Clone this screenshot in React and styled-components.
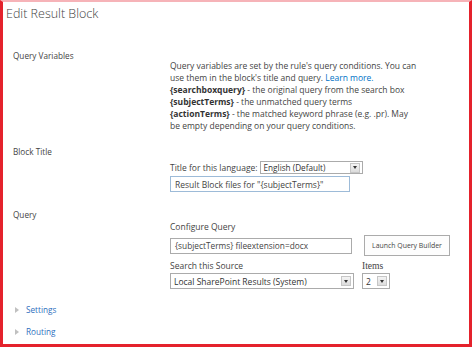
import React from "react";
import styled, { createGlobalStyle } from "styled-components";

const Global = createGlobalStyle`
  html, body { margin: 0; padding: 0; background: #fff; }
  body { font-family: "Open Sans", "Noto Sans", sans-serif; color: #444; }
  * { box-sizing: border-box; }
`;

const Frame = styled.div`
  width: 472px;
  height: 347px;
  border-left: 3px solid #e4222c;
  border-right: 3px solid #e4222c;
  border-bottom: 3px solid #e4222c;
  border-top: 2px solid #f6b3b8;
  display: flex;
  flex-direction: column;
  overflow: hidden;
`;

const Title = styled.h1`
  margin: 0;
  padding: 3px 0 0 3px;
  font-weight: 300;
  font-size: 12.5px;
  line-height: 18px;
  color: #444;
`;

const Section = styled.div`
  display: grid;
  grid-template-columns: 157px 1fr;
  padding-left: 10px;
  margin-top: ${(p) => p.$mt}px;
`;

const Label = styled.div`
  font-size: 8.2px;
  line-height: 12px;
  color: #444;
`;

const Content = styled.div`
  padding-top: ${(p) => p.$pt || 0}px;
  display: flex;
  flex-direction: column;
`;

const Desc = styled.p`
  margin: 0;
  font-size: 8.5px;
  line-height: 12px;
  color: #444;
  b { font-weight: 700; color: #333; }
  a { color: #0072c6; text-decoration: none; }
`;

const Row = styled.div`
  display: flex;
  align-items: ${(p) => p.$align || "center"};
  gap: ${(p) => p.$gap || 0}px;
  margin-top: ${(p) => p.$mt || 0}px;
`;

const SmallText = styled.span`
  font-size: ${(p) => p.$fs || 8.5}px;
  font-family: ${(p) => (p.$serif ? '"Liberation Serif", serif' : "inherit")};
  line-height: 12px;
  color: #444;
  white-space: nowrap;
`;

const SelectBox = styled.div`
  width: ${(p) => p.$w}px;
  height: ${(p) => p.$h || 15}px;
  border: 1px solid #ababab;
  background: #fff;
  display: flex;
  align-items: center;
  justify-content: space-between;
  padding: 0 2px 0 3px;
  font-size: ${(p) => p.$fs || 8.5}px;
  color: #333;
  white-space: nowrap;
`;

const Arrow = styled.span`
  width: 10px;
  height: 10px;
  border: 1px solid #c6c6c6;
  background: linear-gradient(#f4f4f4, #dcdcdc);
  display: flex;
  align-items: center;
  justify-content: center;
  flex: none;
  &::after {
    content: "";
    border-left: 2.5px solid transparent;
    border-right: 2.5px solid transparent;
    border-top: 3px solid #333;
  }
`;

const TextInput = styled.div`
  width: ${(p) => p.$w}px;
  height: ${(p) => p.$h}px;
  border: 1px solid ${(p) => p.$border || "#ababab"};
  display: flex;
  align-items: center;
  padding-left: 4px;
  font-size: ${(p) => p.$fs || 8.5}px;
  color: #444;
  white-space: nowrap;
`;

const Button = styled.div`
  width: 86px;
  height: 21px;
  border: 1px solid #ababab;
  background: #fdfdfd;
  display: flex;
  align-items: center;
  justify-content: center;
  font-size: 6.9px;
  color: #444;
  margin-left: 12px;
`;

const FieldCol = styled.div`
  display: flex;
  flex-direction: column;
  gap: 1px;
  margin-left: ${(p) => p.$ml || 0}px;
`;

const Toggle = styled.div`
  display: flex;
  align-items: center;
  padding-left: 12px;
  margin-top: ${(p) => p.$mt}px;
  font-size: 8.2px;
  line-height: 12px;
  color: #2f6fbe;
  &::before {
    content: "";
    width: 0;
    height: 0;
    border-top: 3px solid transparent;
    border-bottom: 3px solid transparent;
    border-left: 4px solid #c0c0c0;
    margin-right: 7px;
  }
`;

export default function App() {
  return (
    <>
      <Global />
      <Frame>
        <Title>Edit Result Block</Title>
        <Section $mt={27}>
          <Label>Query Variables</Label>
          <Content $pt={10}>
            <Desc>
              Query variables are set by the rule's query conditions. You can
              <br />
              use them in the block's title and query. <a>Learn more.</a>
              <br />
              <b>{"{searchboxquery}"}</b> - the original query from the search box
              <br />
              <b>{"{subjectTerms}"}</b> - the unmatched query terms
              <br />
              <b>{"{actionTerms}"}</b> - the matched keyword phrase (e.g. .pr). May
              <br />
              be empty depending on your query conditions.
            </Desc>
          </Content>
        </Section>
        <Section $mt={14}>
          <Label>Block Title</Label>
          <Content $pt={15}>
            <Row $gap={2}>
              <SmallText>Title for this language:</SmallText>
              <SelectBox $w={103} $h={13} $fs={8.2}>
                English (Default)
                <Arrow />
              </SelectBox>
            </Row>
            <Row $mt={2}>
              <TextInput $w={180} $h={16} $border="#9dbbd8">
                Result Block files for "{"{subjectTerms}"}"
              </TextInput>
            </Row>
          </Content>
        </Section>
        <Section $mt={17}>
          <Label>Query</Label>
          <Content $pt={12}>
            <SmallText>Configure Query</SmallText>
            <Row $mt={2}>
              <TextInput $w={182} $h={16} $fs={8.3}>
                {"{subjectTerms}"} fileextension=docx
              </TextInput>
              <Button>Launch Query Builder</Button>
            </Row>
            <Row $mt={4} $align="flex-end">
              <FieldCol>
                <SmallText>Search this Source</SmallText>
                <SelectBox $w={184} $h={16}>
                  Local SharePoint Results (System)
                  <Arrow />
                </SelectBox>
              </FieldCol>
              <FieldCol $ml={8}>
                <SmallText $fs={9.6} $serif>Items</SmallText>
                <SelectBox $w={28} $h={16}>
                  2
                  <Arrow />
                </SelectBox>
              </FieldCol>
            </Row>
          </Content>
        </Section>
        <Toggle $mt={15}>Settings</Toggle>
        <Toggle $mt={10}>Routing</Toggle>
      </Frame>
    </>
  );
}
